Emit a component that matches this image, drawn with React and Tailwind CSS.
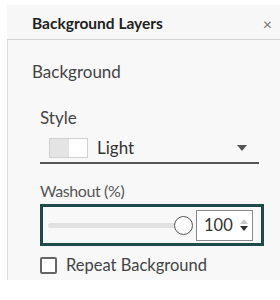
export default function App() {
  return (
    <div className="w-[280px] h-[300px] bg-white font-['Lato','Liberation_Sans',sans-serif] text-[#333]">
      <div className="pt-[5px] pl-[7px]">
        <div className="h-[35px] bg-[#f7f7f7] flex items-center justify-between pt-[4px] pl-[25px] pr-[8px] border-b border-[#d4d4d4]">
          <span className="text-[15.5px] font-bold text-[#222]">Background Layers</span>
          <span className="text-[16px] text-[#777] leading-none">×</span>
        </div>
        <div className="h-[240px] bg-[#f8f8f8] border-l border-[#dcdcdc] pl-[24px] pr-[12px]">
          <div className="pt-[22px] h-[42px] leading-[20px] text-[17px] text-[#444]">Background</div>
          <div className="pl-[8px]">
            <div className="mt-[26px] h-[20px] leading-[20px] text-[17px] text-[#444]">Style</div>
            <div className="mt-[2px] w-[219px] h-[34px] border-b-2 border-[#555] flex items-end pb-[4px] pl-[9px] pr-[12px]">
              <div className="w-[39px] h-[20px] border border-[#d0d0d0] flex">
                <div className="w-1/2 bg-[#e4e4e4]" />
                <div className="w-1/2 bg-white" />
              </div>
              <span className="ml-[9px] h-[20px] leading-[20px] text-[17px] text-[#333]">Light</span>
              <span className="ml-auto mb-[7px] w-0 h-0 border-l-[5px] border-r-[5px] border-t-[6px] border-l-transparent border-r-transparent border-t-[#555]" />
            </div>
            <div className="mt-[17px] h-[20px] leading-[20px] text-[16px] tracking-[-0.4px] text-[#555]">Washout (%)</div>
            <div className="mt-[3px] w-[224px] h-[42px] border-[3px] border-[#1e4a4a] flex items-center pl-[5px] pr-[8px]">
              <div className="w-[128px] h-[5px] bg-[#e2e2e2] rounded-full" />
              <div className="w-[19px] h-[19px] -ml-[2px] rounded-full border border-[#555] bg-white" />
              <div className="ml-[3px] flex-1 h-[31px] border border-[#888] bg-white flex items-center pl-[7px] pr-[4px]">
                <span className="text-[16.5px] text-[#333]">100</span>
                <span className="ml-auto flex flex-col gap-[2px]">
                  <span className="w-0 h-0 border-l-[4px] border-r-[4px] border-b-[5px] border-l-transparent border-r-transparent border-b-[#c8c8c8]" />
                  <span className="w-0 h-0 border-l-[4px] border-r-[4px] border-t-[5px] border-l-transparent border-r-transparent border-t-[#333]" />
                </span>
              </div>
            </div>
            <div className="mt-[9px] h-[20px] flex items-center">
              <div className="w-[17px] h-[17px] border-2 border-[#666] rounded-[2px] bg-white" />
              <span className="ml-[9px] leading-[20px] text-[16.5px] text-[#444]">Repeat Background</span>
            </div>
          </div>
        </div>
      </div>
    </div>
  );
}
